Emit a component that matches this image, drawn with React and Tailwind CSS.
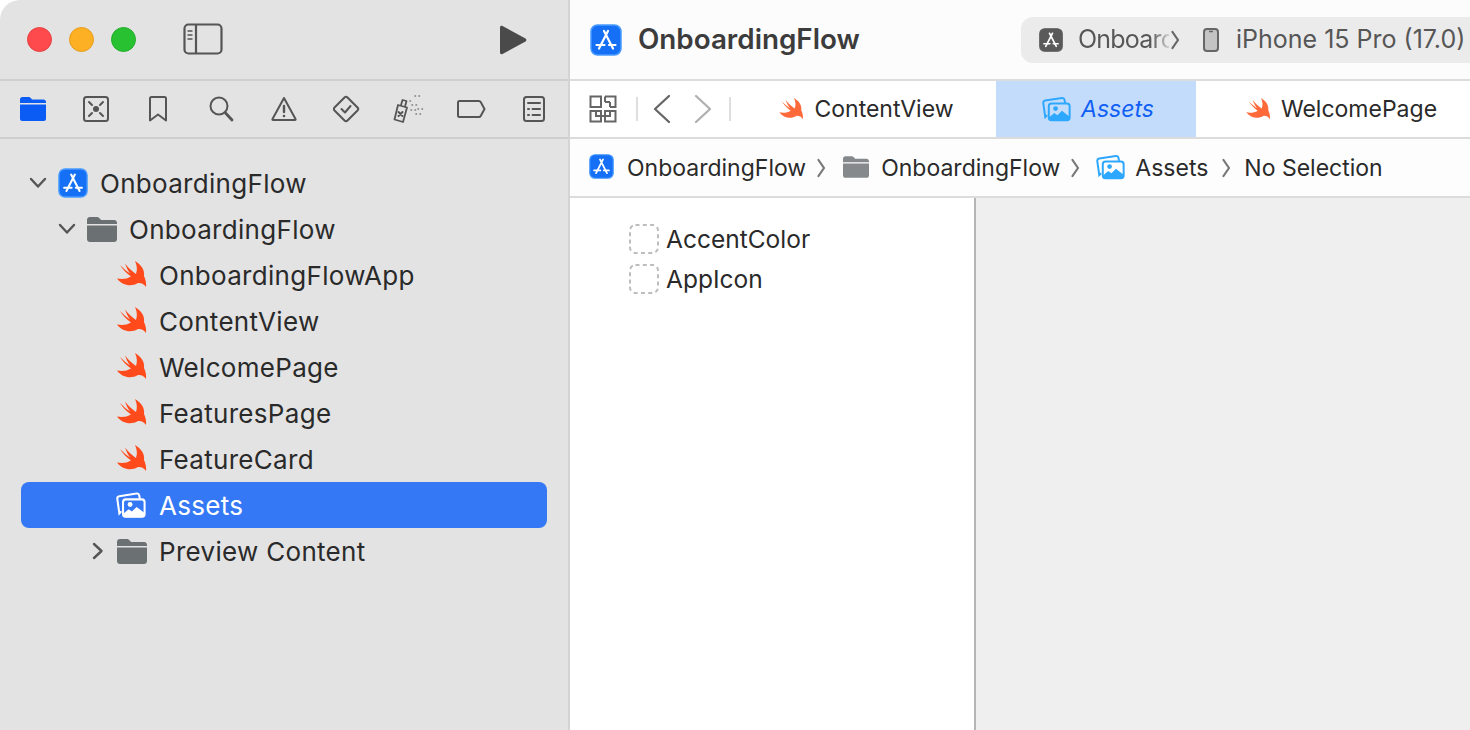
const Swift = ({ className = "w-[30px] h-[27px] -translate-y-[1px]", color = "#ff4a1c" }) => (
  <svg viewBox="0 0 30 27" className={className} fill={color}>
    <path d="M0 17.500C5 18.500 10 18 14 15.500C9 12 5.500 8 3 4C6 7 10 10.500 13 12.500C11 9.500 9 6 8 2.500C11 6.500 15 10.500 19 13C20.500 9 20 4 18 0C24 3.500 28 9 27 15C28.500 18 29.500 22 29 26C27 23 24 21.500 21 22C15 25.500 6 25.500 0 17.500Z" />
  </svg>
);
const AppIcon = ({ className = "w-8 h-8", fill = "#1670f5", edge = "#4a9bff" }) => (
  <svg viewBox="0 0 32 32" className={className}>
    <rect x="1" y="1" width="30" height="30" rx="6.500" fill={fill} stroke={edge} strokeWidth="1.500" />
    <g stroke="#fff" strokeWidth="2.200" strokeLinecap="round" fill="none">
      <path d="M14 7L23 24.500M18 7L9 24.500" />
      <path d="M6.500 21H14.500M19 21H25.500" />
    </g>
  </svg>
);
const Folder = ({ className = "w-[30px] h-[25px]", color = "#6b7073" }) => (
  <svg viewBox="0 0 30 25" className={className} fill={color}>
    <path d="M0 7V3C0 1.300 1.200 0 3 0H9.500C11 0 12 .6 13 1.700L14 3H27C28.800 3 30 4.200 30 6V7Z" />
    <path d="M0 8.500H30V22C30 23.800 28.800 25 27 25H3C1.200 25 0 23.800 0 22Z" />
  </svg>
);
const Assets = ({ className = "w-8 h-[28px]", color = "#2ea8ff" }) => (
  <svg viewBox="0 0 32 28" className={className}>
    <path d="M5 21.500L3.600 23 1.400 7.500C1.200 6 2 5 3.500 4.700L22 1.800C23.500 1.600 24.500 2.300 24.800 3.800L25.300 6.500" fill="none" stroke={color} strokeWidth="2.200" strokeLinecap="round" />
    <rect x="7.500" y="8" width="23" height="18.500" rx="3" fill="none" stroke={color} strokeWidth="2.200" />
    <circle cx="15" cy="13.500" r="2.600" fill={color} />
    <path d="M8 26.500V23L13.500 18.500L17 21L22 16L30.500 22.500V24C30.500 25.500 29.500 27 28 27H10C9 27 8 27 8 26.500Z" fill={color} />
  </svg>
);
const Chevron = ({ open }) => (
  <svg viewBox="0 0 18 18" className="w-[18px] h-[18px]" fill="none" stroke="#555" strokeWidth="2.400" strokeLinecap="round" strokeLinejoin="round">
    {open ? <path d="M2 5L9 12.500L16 5" /> : <path d="M6 2L13.500 9L6 16" />}
  </svg>
);
const Crumb = ({ color = "#777" }) => (
  <svg viewBox="0 0 9 20" className="w-[9px] h-5" fill="none" stroke={color} strokeWidth="2.200" strokeLinecap="round" strokeLinejoin="round">
    <path d="M1.500 2L7 10L1.500 18" />
  </svg>
);
const Slot = () => (
  <svg viewBox="0 0 30 30" className="w-[30px] h-[30px]" fill="none" stroke="#bdbdbd" strokeWidth="2">
    <rect x="1" y="1" width="28" height="28" rx="5.500" strokeDasharray="4 3.300" />
  </svg>
);

const stroke = { fill: "none", stroke: "#555", strokeWidth: 2, strokeLinecap: "round", strokeLinejoin: "round" };
const navIcons = [
  <svg viewBox="0 0 26 24" className="w-[26px] h-6" fill="#0a5cf5">
    <path d="M0 6V2.500C0 1 1 0 2.500 0H8.500C9.800 0 10.500.6 11.300 1.500L12 2.500H23.500C25 2.500 26 3.500 26 5V6Z" />
    <path d="M0 7.500H26V22C26 23.200 25 24 23.800 24H2.200C1 24 0 23.200 0 22Z" />
  </svg>,
  <svg viewBox="0 0 28 28" className="w-7 h-7" {...stroke}>
    <rect x="2" y="2" width="24" height="24" rx="2.500" />
    <circle cx="14" cy="14" r="3" fill="#555" stroke="none" />
    <path d="M7 7L10 10M21 7L18 10M7 21L10 18M21 21L18 18" />
  </svg>,
  <svg viewBox="0 0 20 28" className="w-5 h-7" {...stroke}>
    <path d="M2 3.500C2 2.500 2.500 2 3.500 2H16.500C17.500 2 18 2.500 18 3.500V25.500L10 19.500L2 25.500Z" />
  </svg>,
  <svg viewBox="0 0 26 28" className="w-[26px] h-7" {...stroke}>
    <circle cx="11" cy="11" r="8.500" />
    <path d="M17.500 18L24 25" strokeWidth="2.800" />
  </svg>,
  <svg viewBox="0 0 26 26" className="w-[26px] h-[26px]" {...stroke}>
    <path d="M13 2L24.500 23C24.800 23.600 24.500 24 24 24H2C1.500 24 1.200 23.600 1.500 23Z" />
    <path d="M13 10V16" strokeWidth="2.400" />
    <circle cx="13" cy="20" r="1.300" fill="#555" stroke="none" />
  </svg>,
  <svg viewBox="0 0 28 28" className="w-7 h-7" {...stroke}>
    <path d="M12.500 2.500C13.300 1.700 14.700 1.700 15.500 2.500L25.500 12.500C26.300 13.300 26.300 14.700 25.500 15.500L15.500 25.500C14.700 26.300 13.300 26.300 12.500 25.500L2.500 15.500C1.700 14.700 1.700 13.300 2.500 12.500Z" />
    <path d="M9.500 14L13 17.500L18.500 11" />
  </svg>,
  <svg viewBox="0 0 32 28" className="w-8 h-7" fill="none" stroke="#555" strokeLinecap="round" strokeLinejoin="round" strokeWidth="1.800">
    <path d="M5 10L14 12.500L10 27L1.500 24.500Z" />
    <path d="M8 10L9.500 5L13.500 6L12 11.500" />
    <path d="M5.500 17L9.500 21M9.500 17L5.500 21" strokeWidth="2" />
    <g stroke="#777" strokeWidth="1.500" strokeDasharray="0.500 3.500">
      <path d="M17 6H20M22 1H29M19 10H27M18 15H24M25 14H31M23 19H28" />
    </g>
  </svg>,
  <svg viewBox="0 0 30 20" className="w-[30px] h-5" {...stroke}>
    <path d="M3.500 2H23C23.800 2 24.300 2.300 24.700 3L28.500 10L24.700 17C24.300 17.700 23.800 18 23 18H3.500C2.500 18 2 17.500 2 16.500V3.500C2 2.500 2.500 2 3.500 2Z" />
  </svg>,
  <svg viewBox="0 0 24 28" className="w-6 h-7" {...stroke}>
    <rect x="2" y="2" width="20" height="24" rx="2.500" />
    <path d="M6 8H18M6 14H7M10.500 14H18M6 20H7M10.500 20H18" />
  </svg>,
];

const rows = [
  { pl: "pl-[8px]", chev: "open", icon: <AppIcon />, label: "OnboardingFlow" },
  { pl: "pl-[37px]", chev: "open", icon: <Folder />, label: "OnboardingFlow" },
  { pl: "pl-[67px]", icon: <Swift />, label: "OnboardingFlowApp" },
  { pl: "pl-[67px]", icon: <Swift />, label: "ContentView" },
  { pl: "pl-[67px]", icon: <Swift />, label: "WelcomePage" },
  { pl: "pl-[67px]", icon: <Swift />, label: "FeaturesPage" },
  { pl: "pl-[67px]", icon: <Swift />, label: "FeatureCard" },
  { pl: "pl-[67px]", icon: <Assets className="w-8 h-[28px] -translate-x-[1px]" color="#fff" />, label: "Assets", selected: true },
  { pl: "pl-[67px]", chev: "closed", icon: <Folder />, label: "Preview Content" },
];

export default function App() {
  return (
    <div className="w-[1470px] h-[730px] overflow-hidden flex bg-white text-[26px] leading-none text-[#2a2a2a] font-['Inter',sans-serif]">
      <aside className="w-[570px] shrink-0 bg-[#e3e3e3] border-r-2 border-[#d4d4d4] rounded-tl-[20px] flex flex-col">
        <div className="h-[81px] shrink-0 border-b-2 border-[#cfcfcf] flex items-center pl-[27px] pr-[41px]">
          <div className="flex gap-[17px]">
            <span className="w-[25px] h-[25px] rounded-full bg-[#fe4a4c] border border-[#e64040]"></span>
            <span className="w-[25px] h-[25px] rounded-full bg-[#feb024] border border-[#e79d1c]"></span>
            <span className="w-[25px] h-[25px] rounded-full bg-[#28c131] border border-[#22ad2b]"></span>
          </div>
          <svg viewBox="0 0 40 32" className="w-10 h-8 ml-[47px] -translate-y-[1px]" fill="none" stroke="#555" strokeWidth="2.200">
            <rect x="1.500" y="1.500" width="37" height="29" rx="4" />
            <path d="M13 1.500V30.500" />
            <path d="M4.500 8H9.500M4.500 12H9.500M4.500 16H9.500" strokeWidth="1.500" />
          </svg>
          <svg viewBox="0 0 28 30" className="w-7 h-[30px] ml-auto" fill="#4a4a4a">
            <path d="M1 2.500C1 1 2.300.4 3.500 1L26.500 13.500C27.700 14.300 27.700 15.700 26.500 16.500L3.500 29C2.300 29.600 1 29 1 27.500Z" />
          </svg>
        </div>
        <nav className="h-[58px] shrink-0 border-b-2 border-[#cfcfcf] flex items-center pl-[2px]">
          {navIcons.map((icon, i) => (
            <div key={i} className="w-[62.6px] flex justify-center">{icon}</div>
          ))}
        </nav>
        <div className="pt-[21px] px-[21px] flex flex-col">
          {rows.map((r, i) => (
            <div key={i} className={`h-[46px] flex items-center rounded-lg ${r.pl} ${r.selected ? "bg-[#3478f6] text-white" : ""}`}>
              <div className="w-[18px] mr-[11px] flex justify-center">{r.chev && <Chevron open={r.chev === "open"} />}</div>
              <div className="w-[30px] mr-3 flex justify-center">{r.icon}</div>
              <span className="pt-[2px] tracking-[0.3px]">{r.label}</span>
            </div>
          ))}
        </div>
      </aside>
      <main className="flex-1 min-w-0 flex flex-col">
        <header className="h-[81px] shrink-0 bg-[#fcfcfc] border-b-2 border-[#dcdcdc] flex items-center pl-[20px]">
          <AppIcon className="w-[32px] h-[32px]" />
          <h1 className="ml-[16px] font-semibold text-[#3c3c3c] text-[27.8px]">OnboardingFlow</h1>
          <div className="ml-auto w-[449px] h-[46px] bg-[#ebebeb] rounded-l-xl flex items-center pl-[18px] text-[25px] text-[#565656] whitespace-nowrap">
            <AppIcon className="w-6 h-6" fill="#5a5a5a" edge="#5a5a5a" />
            <span className="ml-[15px] w-[91px] shrink-0 tracking-[-0.8px] bg-linear-to-r from-[#565656] from-80% to-[#d0d0d0] bg-clip-text text-transparent">Onboarc</span>
            <span className="ml-[2px]"><Crumb color="#666" /></span>
            <svg viewBox="0 0 16 24" className="w-4 h-6 ml-[23px]" fill="#c4c4c4" stroke="#666" strokeWidth="2">
              <rect x="1" y="1" width="14" height="22" rx="3" />
              <path d="M6 3.500H10" strokeWidth="1.500" />
            </svg>
            <span className="ml-[17px]">iPhone 15 Pro (17.0)</span>
          </div>
        </header>
        <div className="h-[58px] shrink-0 border-b-2 border-[#dcdcdc] flex items-center text-[23px]">
          <svg viewBox="0 0 28 28" className="w-7 h-7 ml-[19px]" fill="none" stroke="#666" strokeWidth="2">
            <path d="M1.500 1.500H12V12H1.500ZM16 1.500H26.500V12H21M16 1.500V7M21 7H16M21 7V12M1.500 16H7V21H12V26.500H1.500ZM7 21V16H12V21M16 16H26.500V26.500H16ZM12 21H21V16" />
          </svg>
          <span className="w-[2px] h-6 bg-[#dedede] ml-[19px]"></span>
          <svg viewBox="0 0 18 30" className="w-[18px] h-[30px] ml-[15px]" fill="none" stroke="#666" strokeWidth="2.300" strokeLinecap="round" strokeLinejoin="round">
            <path d="M16 2L2 15L16 28" />
          </svg>
          <svg viewBox="0 0 18 30" className="w-[18px] h-[30px] ml-[23px]" fill="none" stroke="#b0b0b0" strokeWidth="2.300" strokeLinecap="round" strokeLinejoin="round">
            <path d="M2 2L16 15L2 28" />
          </svg>
          <span className="w-[2px] h-6 bg-[#dedede] ml-[17px]"></span>
          <div className="w-[265px] h-full flex items-center justify-center gap-[10px] pl-[6px]">
            <Swift className="w-[25px] h-[22px]" color="#ff6a3a" />
            <span>ContentView</span>
          </div>
          <div className="w-[200px] h-full bg-[#c3dcfb] flex items-center justify-center gap-[10px] pl-[4px] text-[#0f5ef5]">
            <Assets className="w-[29px] h-[26px]" />
            <span className="italic">Assets</span>
          </div>
          <div className="flex-1 h-full flex items-center justify-center gap-[10px] pl-[17px]">
            <Swift className="w-[25px] h-[22px]" color="#ff6a3a" />
            <span>WelcomePage</span>
          </div>
        </div>
        <div className="h-[59px] shrink-0 bg-[#fdfdfd] border-b-2 border-[#dcdcdc] flex items-center pl-[19px] text-[23px]">
          <AppIcon className="w-[25px] h-[25px] -translate-y-[1px]" />
          <span className="ml-[13px] pt-[2px]">OnboardingFlow</span>
          <span className="ml-[11px]"><Crumb /></span>
          <Folder className="w-[26px] h-[22px] ml-[17px] -translate-y-[1px]" color="#85898c" />
          <span className="ml-[12px] pt-[2px]">OnboardingFlow</span>
          <span className="ml-[11px]"><Crumb /></span>
          <Assets className="w-[29px] h-[26px] ml-[16px] -translate-y-[1px]" />
          <span className="ml-[10px] pt-[2px]">Assets</span>
          <span className="ml-[14px]"><Crumb /></span>
          <span className="ml-[13px] pt-[2px]">No Selection</span>
        </div>
        <div className="flex-1 flex min-h-0">
          <div className="w-[406px] bg-white border-r-2 border-[#b5b5b5] pt-[21px] pl-[59px] flex flex-col">
            {["AccentColor", "AppIcon"].map((t) => (
              <div key={t} className="h-10 flex items-center gap-[7px] text-[24.5px]">
                <Slot />
                <span>{t}</span>
              </div>
            ))}
          </div>
          <div className="flex-1 bg-[#efefef]"></div>
        </div>
      </main>
    </div>
  );
}
